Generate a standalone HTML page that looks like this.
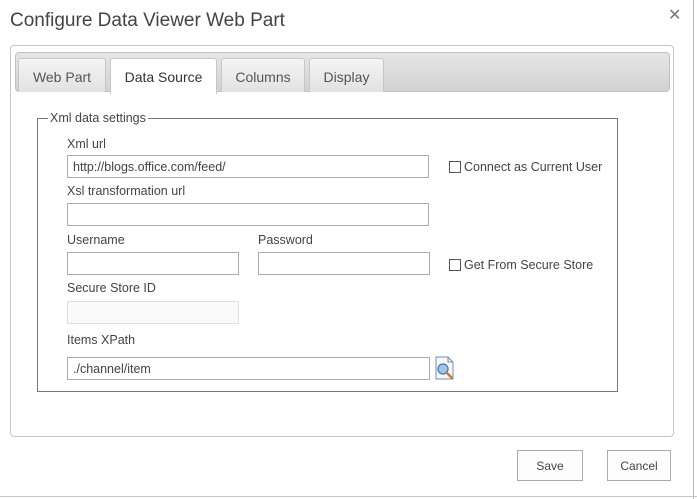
<!DOCTYPE html>
<html><head><style>
*{margin:0;padding:0;box-sizing:border-box}
body{width:697px;height:499px;background:#fff;position:relative;overflow:hidden;font-family:"Segoe UI","Liberation Sans",sans-serif;color:#444;font-size:12.5px}
.a{position:absolute}
.inp{position:absolute;border:1px solid #ababab;background:#fff;height:23px;padding:4px 5px;font-size:12.5px;color:#444}
.lbl{position:absolute;font-size:12.5px;color:#444}
.cb{position:absolute;width:12px;height:12px;border:1px solid #555;background:#fff}
.tab{position:absolute;top:58px;height:34px;border:1px solid #c6c6c6;border-bottom:none;border-radius:3px 3px 0 0;background:linear-gradient(#f4f4f4,#e2e2e2);text-align:center;line-height:36px;font-size:14px;color:#555}
.btn{position:absolute;top:450px;height:31px;border:1px solid #ababab;background:#fdfdfd;text-align:center;line-height:31px;font-size:12px;color:#444}
</style></head><body>
<div class="a" style="left:10px;top:10px;font-size:19px;color:#444">Configure Data Viewer Web Part</div>
<div class="a" style="left:668px;top:5px;font-size:16px;color:#777">✕</div>
<div class="a" style="left:693px;top:0;width:1px;height:499px;background:#bbb"></div>
<div class="a" style="left:0;top:496px;width:697px;height:1px;background:#c6c6c6"></div>
<div class="a" style="left:10px;top:45px;width:664px;height:392px;border:1px solid #c6c6c6;border-radius:4px"></div>
<div class="a" style="left:15px;top:52px;width:655px;height:40px;border:1px solid #c0c0c0;border-radius:4px;background:linear-gradient(#e6e6e6,#d2d2d2)"></div>
<div class="tab" style="left:18px;width:88px">Web Part</div>
<div class="tab" style="left:110px;width:107px;height:36px;background:#fff;color:#333">Data Source</div>
<div class="tab" style="left:221px;width:84px">Columns</div>
<div class="tab" style="left:309px;width:75px">Display</div>
<div class="a" style="left:37px;top:118px;width:581px;height:274px;border:1px solid #777"></div>
<div class="lbl" style="left:48px;top:111px;background:#fff;padding:0 2px">Xml data settings</div>
<div class="lbl" style="left:67px;top:137px">Xml url</div>
<div class="inp" style="left:67px;top:155px;width:362px">http://blogs.office.com/feed/</div>
<div class="cb" style="left:449px;top:161px"></div>
<div class="lbl" style="left:464px;top:160px">Connect as Current User</div>
<div class="lbl" style="left:67px;top:184px">Xsl transformation url</div>
<div class="inp" style="left:67px;top:203px;width:362px"></div>
<div class="lbl" style="left:67px;top:233px">Username</div>
<div class="lbl" style="left:258px;top:233px">Password</div>
<div class="inp" style="left:67px;top:252px;width:172px"></div>
<div class="inp" style="left:258px;top:252px;width:172px"></div>
<div class="cb" style="left:449px;top:259px"></div>
<div class="lbl" style="left:464px;top:258px">Get From Secure Store</div>
<div class="lbl" style="left:67px;top:281px">Secure Store ID</div>
<div class="inp" style="left:67px;top:301px;width:172px;border-color:#e0e0e0;background:#fafafa"></div>
<div class="lbl" style="left:67px;top:333px">Items XPath</div>
<div class="inp" style="left:67px;top:357px;width:363px">./channel/item</div>
<svg class="a" style="left:434px;top:356px" width="22" height="24" viewBox="0 0 22 24">
<path d="M2 1h12l5 5v17H2z" fill="#f4f7fb" stroke="#7a8fa8"/>
<path d="M14 1v5h5" fill="none" stroke="#7a8fa8"/>
<circle cx="9" cy="13" r="5" fill="#9cc6e8" stroke="#4a7aa8" stroke-width="1.3"/>
<path d="M12.5 16.5l5 5" stroke="#d87a2a" stroke-width="2.6" stroke-linecap="round"/>
</svg>
<div class="btn" style="left:517px;width:66px">Save</div>
<div class="btn" style="left:607px;width:64px">Cancel</div>
</body></html>
